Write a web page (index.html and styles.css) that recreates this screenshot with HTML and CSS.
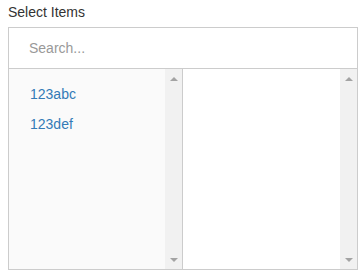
FILE: index.html
```html
<!DOCTYPE html>
<html>
<head>
<meta charset="utf-8">
<link rel="stylesheet" href="styles.css">
</head>
<body>
<div class="picker">
  <div class="label">Select Items</div>
  <div class="box">
    <input class="search" type="text" placeholder="Search...">
    <div class="lists">
      <div class="list list-source">
        <div class="list-body">
          <div class="item">123abc</div>
          <div class="item">123def</div>
        </div>
        <div class="scrollbar">
          <span class="arrow arrow-up"></span>
          <span class="arrow arrow-down"></span>
        </div>
      </div>
      <div class="list list-target">
        <div class="list-body"></div>
        <div class="scrollbar">
          <span class="arrow arrow-up"></span>
          <span class="arrow arrow-down"></span>
        </div>
      </div>
    </div>
  </div>
</div>
</body>
</html>
```
FILE: styles.css
```css
html, body {
  margin: 0;
  padding: 0;
  background: #fff;
}
body {
  font-family: "Liberation Sans", Arial, sans-serif;
  font-size: 14px;
  color: #333;
}
.picker {
  padding: 2px 5px 0 8px;
}
.label {
  line-height: 20px;
  margin-bottom: 5px;
}
.box {
  border: 1px solid #ccc;
  width: 348px;
}
.search {
  display: block;
  box-sizing: border-box;
  width: 100%;
  height: 41px;
  margin: 0;
  border: 0;
  border-bottom: 1px solid #ccc;
  padding: 0 20px;
  font-family: inherit;
  font-size: 14px;
  color: #333;
  outline: none;
}
.search::placeholder {
  color: #999;
}
.lists {
  display: flex;
  height: 200px;
}
.list {
  display: flex;
  box-sizing: border-box;
}
.list-source {
  width: 173px;
  background: #fafafa;
}
.list-target {
  flex: 1 1 0;
  background: #fff;
  border-left: 1px solid #ccc;
}
.list-body {
  flex: 1 1 0;
  padding-top: 10px;
}
.item {
  line-height: 30px;
  padding: 0 21px;
  color: #337ab7;
}
.scrollbar {
  width: 17px;
  background: #f1f1f1;
  display: flex;
  flex-direction: column;
  justify-content: space-between;
  align-items: center;
  padding: 8px 0 7px;
  box-sizing: border-box;
}
.arrow {
  width: 0;
  height: 0;
  border-left: 4px solid transparent;
  border-right: 4px solid transparent;
}
.arrow-up {
  border-bottom: 4px solid #a3a3a3;
}
.arrow-down {
  border-top: 4px solid #a3a3a3;
}
```
